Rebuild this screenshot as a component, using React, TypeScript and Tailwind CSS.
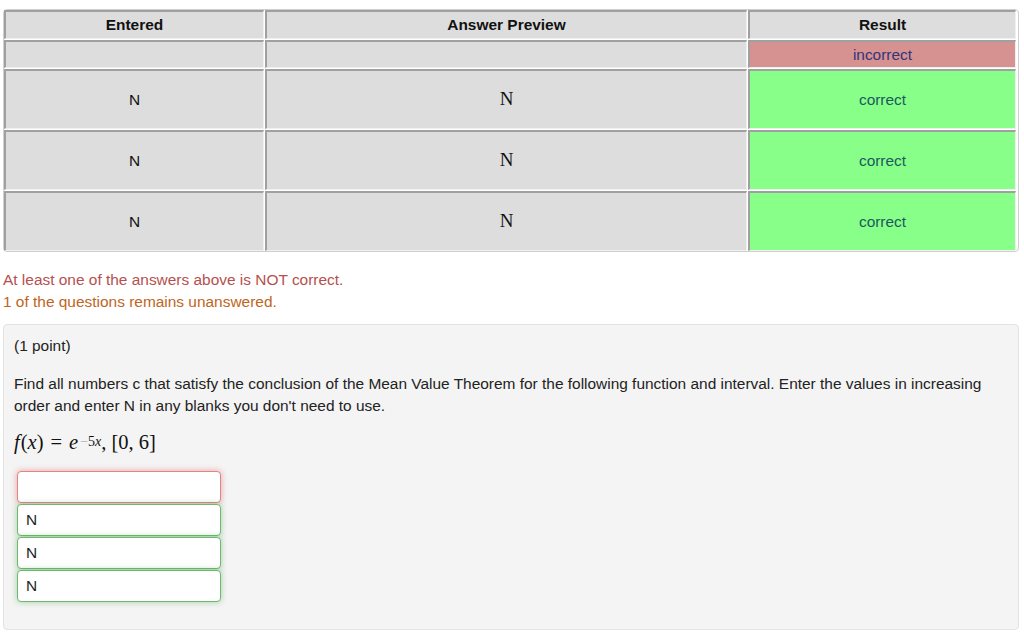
import React from "react";

const sans = { fontFamily: '"Liberation Sans", Arial, sans-serif' };
const serif = { fontFamily: '"Liberation Serif", "DejaVu Serif", serif' };

type Row = { entered: string; preview: string; result: "correct" | "incorrect"; tall: boolean };

const rows: Row[] = [
  { entered: "", preview: "", result: "incorrect", tall: false },
  { entered: "N", preview: "N", result: "correct", tall: true },
  { entered: "N", preview: "N", result: "correct", tall: true },
  { entered: "N", preview: "N", result: "correct", tall: true },
];

const cell =
  "bg-[#dddddd] border-t-[2px] border-l-[2px] border-b border-r border-t-[#a0a0a0] border-l-[#a0a0a0] border-b-[#f0f0f0] border-r-[#f0f0f0] text-center align-middle p-0";

function ResultCell({ result }: { result: Row["result"] }) {
  if (result === "incorrect") {
    return (
      <td className="bg-[#d69191] border-t-[2px] border-l-[2px] border-b border-r border-t-[#a0a0a0] border-l-[#a0a0a0] border-b-[#f0f0f0] border-r-[#f0f0f0] text-center align-middle text-[#33347a] p-0">
        incorrect
      </td>
    );
  }
  return (
    <td className="bg-[#88ff88] border-t-[2px] border-l-[2px] border-b border-r border-t-[#a0a0a0] border-l-[#a0a0a0] border-b-[#f0f0f0] border-r-[#f0f0f0] text-center align-middle text-[#1c5a60] p-0">
      correct
    </td>
  );
}

// f(x) = e^{-5x}, [0,6] set in a serif face, roughly as MathJax draws it
function MathLine() {
  return (
    <div className="text-[20.5px] text-[#111] leading-[22px] whitespace-nowrap" style={serif}>
      <span className="italic">f</span>
      <span className="ml-[1px]">(</span>
      <span className="italic">x</span>
      <span>)</span>
      <span className="mx-[7px]">=</span>
      <span className="italic">e</span>
      <sup className="text-[14px] relative -top-[3px] ml-[2px]">
        <span className="text-[#b0b0b0]">−</span>5<span className="italic">x</span>
      </sup>
      <span>, [0, 6]</span>
    </div>
  );
}

function AnswerInput({ value, status }: { value: string; status: "bad" | "good" }) {
  const cls =
    status === "bad"
      ? "border-[#e08585] shadow-[0_0_6px_rgba(220,60,60,0.45)]"
      : "border-[#6fb86f] shadow-[0_0_6px_rgba(60,160,60,0.45)]";
  return (
    <div
      className={`w-[204px] h-[32px] bg-white border rounded-[4px] px-[8px] flex items-center text-[15.45px] text-[#222] ${cls}`}
    >
      {value}
    </div>
  );
}

export default function App() {
  return (
    <div className="min-h-[635px] bg-white px-[3px] pt-[9px] text-[15.45px] text-[#222]" style={sans}>
      <div className="border border-[#cfcfcf] rounded-[4px] bg-white w-[1016px]">
        <table className="table-fixed border-separate border-spacing-[1px] w-[1014px] -m-[1px]">
          <thead>
            <tr className="h-[29px]">
              <th className={`${cell} w-[260px] font-bold text-[#111]`}>Entered</th>
              <th className={`${cell} w-[482px] font-bold text-[#111]`}>Answer Preview</th>
              <th className={`${cell} w-[268px] font-bold text-[#111]`}>Result</th>
            </tr>
          </thead>
          <tbody>
            {rows.map((r, i) => (
              <tr key={i} className={r.tall ? "h-[60px]" : "h-[28px]"}>
                <td className={`${cell} text-[#111]`}>{r.entered}</td>
                <td className={`${cell} text-[19px] text-[#111]`} style={serif}>
                  {r.preview}
                </td>
                <ResultCell result={r.result} />
              </tr>
            ))}
          </tbody>
        </table>
      </div>

      <div className="mt-[17px] leading-[22px]">
        <div className="text-[#b5504e]">At least one of the answers above is NOT correct.</div>
        <div className="text-[#c0651d]">1 of the questions remains unanswered.</div>
      </div>

      <div className="mt-[11px] w-[1016px] bg-[#f4f4f4] border border-[#e3e3e3] rounded-[4px] px-[10px] pt-[10px] pb-[27px] leading-[22px]">
        <div>(1 point)</div>
        <p className="mt-[16px]">
          Find all numbers c that satisfy the conclusion of the Mean Value Theorem for the following function and
          interval. Enter the values in increasing order and enter N in any blanks you don't need to use.
        </p>
        <div className="mt-[14px]">
          <MathLine />
        </div>
        <div className="mt-[18px] ml-[3px] flex flex-col gap-[1px]">
          <AnswerInput value="" status="bad" />
          <AnswerInput value="N" status="good" />
          <AnswerInput value="N" status="good" />
          <AnswerInput value="N" status="good" />
        </div>
      </div>
    </div>
  );
}
